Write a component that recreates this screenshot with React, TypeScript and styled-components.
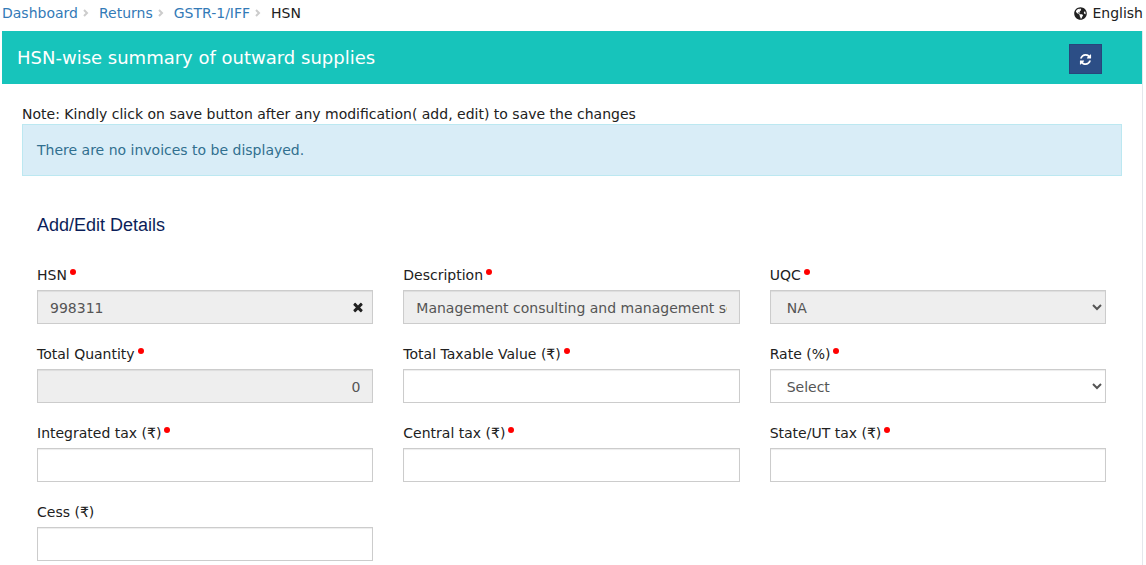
import React from "react";
import styled, { createGlobalStyle, css } from "styled-components";
import { FaGlobeAmericas } from "react-icons/fa";

const GlobalStyle = createGlobalStyle`
  *, *::before, *::after { box-sizing: border-box; }
  body {
    margin: 0;
    background: #fff;
    color: #212121;
    font: 14px/20px Verdana, "DejaVu Sans", sans-serif;
  }
  button, input, select { font: inherit; }
`;

const Page = styled.div`
  padding: 0 3px 0 2px;
`;

const TopBar = styled.header`
  display: flex;
  justify-content: space-between;
  align-items: center;
  padding: 3px 0 8px;
`;

const Crumbs = styled.ol`
  display: flex;
  margin: 0;
  padding: 0;
  list-style: none;
`;

const Crumb = styled.li`
  display: flex;
  align-items: center;
`;

const CrumbLink = styled.a`
  color: #337ab7;
  text-decoration: none;
`;

const Chevron = styled.svg`
  width: 6px;
  height: 8px;
  margin: 0 10px 0 5px;
  fill: none;
  stroke: #ccc;
  stroke-width: 2;
`;

const Language = styled.button`
  display: flex;
  align-items: center;
  gap: 5px;
  padding: 0;
  border: 0;
  background: none;
  color: #212121;
  line-height: 20px;
`;

const Panel = styled.main`
  border-right: 1px solid #e4e7ec;
`;

const TitleBar = styled.div`
  display: flex;
  justify-content: space-between;
  align-items: center;
  height: 53px;
  padding: 0 40px 0 15px;
  background: #17c4bb;
`;

const Title = styled.h1`
  margin: 0;
  color: #fff;
  font-size: 18px;
  font-weight: 400;
  line-height: 20px;
`;

const RefreshButton = styled.button`
  display: flex;
  align-items: center;
  justify-content: center;
  width: 33px;
  height: 30px;
  margin-top: 3px;
  padding: 0;
  border: 1px solid #27467b;
  background: #2c4e86;
  color: #fff;
`;

const Content = styled.div`
  padding: 20px 20px 4px;
`;

const Note = styled.p`
  margin: 0;
`;

const Alert = styled.div`
  padding: 15px 14px;
  border: 1px solid #bce8f1;
  background: #d9edf7;
  color: #31708f;
`;

const Form = styled.form`
  padding: 39px 16px 0 15px;
`;

const FormTitle = styled.h2`
  margin: 0 0 30px;
  color: #0b1e59;
  font: 400 18px/20px Arial, "Liberation Sans", sans-serif;
`;

const FieldGrid = styled.div`
  display: grid;
  grid-template-columns: repeat(3, minmax(0, 1fr));
  gap: 20px 30px;
`;

const FieldLabel = styled.label<{ $required?: boolean }>`
  display: flex;
  align-items: center;
  margin-bottom: 5px;
  ${(p) =>
    p.$required &&
    css`
      &::after {
        content: "";
        width: 6px;
        height: 6px;
        margin: 0 0 6px 3px;
        border-radius: 50%;
        background: #f00;
      }
    `}
`;

const controlStyle = css`
  display: block;
  width: 100%;
  height: 34px;
  padding: 7px 12px 5px;
  border: 1px solid #ccc;
  border-radius: 0;
  background: #fff;
  box-shadow: inset 0 1px 1px rgba(0, 0, 0, 0.075);
  color: #555;
  opacity: 1;
  &:disabled {
    background: #eee;
  }
`;

const TextBox = styled.input<{ $numeric?: boolean }>`
  ${controlStyle}
  text-align: ${(p) => (p.$numeric ? "right" : "left")};
`;

const DropDown = styled.select`
  ${controlStyle}
  padding-right: 3px;
`;

const ControlWrap = styled.div`
  position: relative;
`;

const ClearButton = styled.button`
  position: absolute;
  top: 7px;
  right: 5px;
  display: flex;
  align-items: center;
  justify-content: center;
  width: 20px;
  height: 20px;
  padding: 0;
  border: 0;
  background: none;
  color: #212121;
`;

const RefreshIcon = () => (
  <svg width="13" height="13" viewBox="0 0 1792 1792" fill="currentColor" aria-hidden="true">
    <path d="M1639 1056q0 5-1 7-64 268-268 434.5t-478 166.5q-146 0-282.5-55t-243.5-157l-129 129q-19 19-45 19t-45-19-19-45v-448q0-26 19-45t45-19h448q26 0 45 19t19 45-19 45l-137 137q71 66 161 102t187 36q134 0 250-65t186-179q11-17 53-117 8-23 30-23h192q13 0 22.5 9.5t9.5 22.5zm25-800v448q0 26-19 45t-45 19h-448q-26 0-45-19t-19-45 19-45l138-138q-148-137-349-137-134 0-250 65t-186 179q-11 17-53 117-8 23-30 23h-199q-13 0-22.5-9.5t-9.5-22.5v-7q65-268 270-434.5t480-166.5q146 0 284 55.5t245 156.5l130-129q19-19 45-19t45 19 19 45z" />
  </svg>
);

const ClearIcon = () => (
  <svg width="14" height="14" viewBox="0 0 1792 1792" fill="currentColor" aria-hidden="true">
    <path d="M1490 1322q0 40-28 68l-136 136q-28 28-68 28t-68-28l-294-294-294 294q-28 28-68 28t-68-28l-136-136q-28-28-28-68t28-68l294-294-294-294q-28-28-28-68t28-68l136-136q28-28 68-28t68 28l294 294 294-294q28-28 68-28t68 28l136 136q28 28 28 68t-28 68l-294 294 294 294q28 28 28 68z" />
  </svg>
);

interface FieldSpec {
  id: string;
  label: string;
  required?: boolean;
  disabled?: boolean;
  numeric?: boolean;
  clearable?: boolean;
  value?: string;
  options?: string[];
}

const fields: FieldSpec[] = [
  { id: "hsn", label: "HSN", required: true, disabled: true, clearable: true, value: "998311" },
  {
    id: "description",
    label: "Description",
    required: true,
    disabled: true,
    value: "Management consulting and management services",
  },
  { id: "uqc", label: "UQC", required: true, disabled: true, options: ["NA"] },
  { id: "quantity", label: "Total Quantity", required: true, disabled: true, numeric: true, value: "0" },
  { id: "taxable", label: "Total Taxable Value (₹)", required: true, numeric: true },
  { id: "rate", label: "Rate (%)", required: true, options: ["Select"] },
  { id: "igst", label: "Integrated tax (₹)", required: true, numeric: true },
  { id: "cgst", label: "Central tax (₹)", required: true, numeric: true },
  { id: "sgst", label: "State/UT tax (₹)", required: true, numeric: true },
  { id: "cess", label: "Cess (₹)", numeric: true },
];

const Field = ({ id, label, required, disabled, numeric, clearable, value, options }: FieldSpec) => (
  <div>
    <FieldLabel htmlFor={id} $required={required}>
      {label}
    </FieldLabel>
    <ControlWrap>
      {options ? (
        <DropDown id={id} disabled={disabled}>
          {options.map((o) => (
            <option key={o}>{o}</option>
          ))}
        </DropDown>
      ) : (
        <TextBox id={id} type="text" disabled={disabled} defaultValue={value} $numeric={numeric} />
      )}
      {clearable && (
        <ClearButton type="button" aria-label={`Clear ${label}`}>
          <ClearIcon />
        </ClearButton>
      )}
    </ControlWrap>
  </div>
);

export default function App() {
  return (
    <>
      <GlobalStyle />
      <Page>
        <TopBar>
          <nav aria-label="Breadcrumb">
            <Crumbs>
              {["Dashboard", "Returns", "GSTR-1/IFF"].map((name) => (
                <Crumb key={name}>
                  <CrumbLink href="#">{name}</CrumbLink>
                  <Chevron viewBox="0 0 6 8" aria-hidden="true">
                    <path d="M1 1l3 3-3 3" />
                  </Chevron>
                </Crumb>
              ))}
              <Crumb aria-current="page">HSN</Crumb>
            </Crumbs>
          </nav>
          <Language type="button">
            <FaGlobeAmericas size={13} aria-hidden="true" />
            English
          </Language>
        </TopBar>
        <Panel>
          <TitleBar>
            <Title>HSN-wise summary of outward supplies</Title>
            <RefreshButton type="button" aria-label="Refresh">
              <RefreshIcon />
            </RefreshButton>
          </TitleBar>
          <Content>
            <Note>
              Note: Kindly click on save button after any modification( add, edit) to save the changes
            </Note>
            <Alert role="status">There are no invoices to be displayed.</Alert>
            <Form>
              <FormTitle>Add/Edit Details</FormTitle>
              <FieldGrid>
                {fields.map((f) => (
                  <Field key={f.id} {...f} />
                ))}
              </FieldGrid>
            </Form>
          </Content>
        </Panel>
      </Page>
    </>
  );
}
